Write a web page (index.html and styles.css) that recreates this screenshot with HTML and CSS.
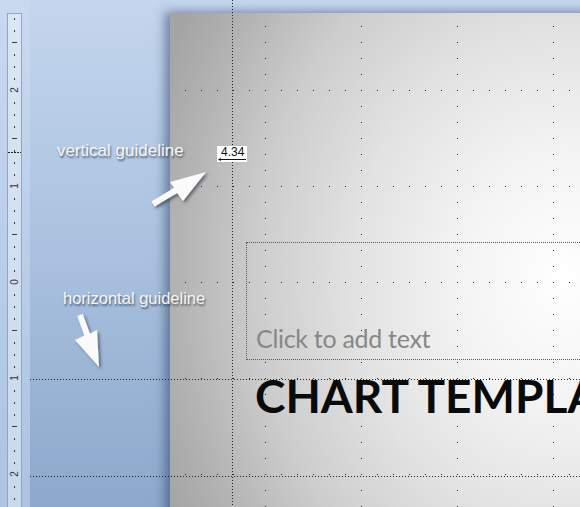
FILE: index.html
```html
<!DOCTYPE html>
<html>
<head>
<meta charset="utf-8">
<link rel="stylesheet" href="styles.css">
</head>
<body>
<div class="screen">
  <div class="ruler-panel">
    <div class="ruler">
      <svg class="ruler-marks" width="13" height="493" viewBox="0 0 13 493">
        <g fill="#3a3a3a">
          <rect x="6" y="4" width="1" height="2"/><rect x="6" y="16" width="1" height="2"/>
          <rect x="6" y="40" width="1" height="2"/><rect x="6" y="52" width="1" height="2"/><rect x="6" y="64" width="1" height="2"/>
          <rect x="6" y="88" width="1" height="2"/><rect x="6" y="100" width="1" height="2"/><rect x="6" y="112" width="1" height="2"/>
          <rect x="6" y="136" width="1" height="2"/><rect x="6" y="148" width="1" height="2"/><rect x="6" y="160" width="1" height="2"/>
          <rect x="6" y="184" width="1" height="2"/><rect x="6" y="196" width="1" height="2"/><rect x="6" y="208" width="1" height="2"/>
          <rect x="6" y="232" width="1" height="2"/><rect x="6" y="244" width="1" height="2"/><rect x="6" y="256" width="1" height="2"/>
          <rect x="6" y="280" width="1" height="2"/><rect x="6" y="292" width="1" height="2"/><rect x="6" y="304" width="1" height="2"/>
          <rect x="6" y="328" width="1" height="2"/><rect x="6" y="340" width="1" height="2"/><rect x="6" y="352" width="1" height="2"/>
          <rect x="6" y="376" width="1" height="2"/><rect x="6" y="388" width="1" height="2"/><rect x="6" y="400" width="1" height="2"/>
          <rect x="6" y="424" width="1" height="2"/><rect x="6" y="436" width="1" height="2"/><rect x="6" y="448" width="1" height="2"/>
          <rect x="6" y="472" width="1" height="2"/><rect x="6" y="484" width="1" height="2"/>
          <rect x="4" y="28" width="5" height="1"/><rect x="4" y="124" width="5" height="1"/>
          <rect x="4" y="220" width="5" height="1"/><rect x="4" y="316" width="5" height="1"/>
          <rect x="4" y="412" width="5" height="1"/>
        </g>
        <line x1="0" y1="138.5" x2="13" y2="138.5" stroke="#222" stroke-width="1" stroke-dasharray="2 1"/>
        <g class="ruler-num">
          <text transform="translate(6.5 76) rotate(-90)">2</text>
          <text transform="translate(6.5 172) rotate(-90)">1</text>
          <text transform="translate(6.5 268) rotate(-90)">0</text>
          <text transform="translate(6.5 364) rotate(-90)">1</text>
          <text transform="translate(6.5 460) rotate(-90)">2</text>
        </g>
      </svg>
    </div>
  </div>
  <div class="workspace">
    <div class="slide">
      <svg class="grid" width="700" height="600">
        <defs>
          <pattern id="dots" x="15" y="13" width="96" height="96" patternUnits="userSpaceOnUse">
            <g fill="#2a2a2a">
              <rect x="80" y="0" width="1" height="1"/><rect x="80" y="16" width="1" height="1"/>
              <rect x="80" y="32" width="1" height="1"/><rect x="80" y="48" width="1" height="1"/>
              <rect x="80" y="64" width="1" height="1"/><rect x="80" y="80" width="1" height="1"/>
              <rect x="0" y="64" width="1" height="1"/><rect x="16" y="64" width="1" height="1"/>
              <rect x="32" y="64" width="1" height="1"/><rect x="48" y="64" width="1" height="1"/>
              <rect x="64" y="64" width="1" height="1"/>
            </g>
          </pattern>
        </defs>
        <rect width="700" height="600" fill="url(#dots)"/>
      </svg>
      <div class="slide-body">
        <div class="placeholder"><span class="placeholder-text">Click to add text</span></div>
        <div class="title">CHART TEMPLATE</div>
      </div>
    </div>
  </div>

  <div class="vguide"></div>
  <div class="hguide hguide-1"></div>
  <div class="hguide hguide-2"></div>

  <div class="label label-v">vertical guideline</div>
  <div class="label label-h">horizontal guideline</div>

  <svg class="arrows" width="580" height="507" viewBox="0 0 580 507">
    <defs>
      <filter id="shadow" x="-30%" y="-30%" width="160%" height="160%">
        <feDropShadow dx="2" dy="2" stdDeviation="1.5" flood-color="#1e2a3a" flood-opacity="0.55"/>
      </filter>
    </defs>
    <polygon filter="url(#shadow)" fill="#fbfbfb" points="151.5,201.4 174.1,187.7 170,182 206,172 183,201 177.2,192.9 154.6,206.6"/>
    <polygon filter="url(#shadow)" fill="#fbfbfb" points="77.2,316 84.3,335.5 75,340 99,367 97,330 89.9,333.5 82.8,314"/>
  </svg>

  <div class="tag">
    <span class="tag-text">4.34</span>
    <svg class="tag-arrow" width="30" height="4" viewBox="0 0 30 4">
      <line x1="3" y1="1.5" x2="29" y2="1.5" stroke="#111" stroke-width="1"/>
      <polygon points="1,1.5 4,0 4,3" fill="#111"/>
    </svg>
  </div>
</div>
</body>
</html>
```

FILE: styles.css
```css
html, body {
  margin: 0;
  padding: 0;
}
body {
  width: 580px;
  height: 507px;
  overflow: hidden;
  font-family: "Liberation Sans", Arial, sans-serif;
}
.screen {
  position: relative;
  width: 580px;
  height: 507px;
  overflow: hidden;
  display: flex;
  background: linear-gradient(to bottom, #c4d6ed 0%, #aac1df 50%, #8ca8cb 100%);
}
.ruler-panel {
  flex: none;
  width: 30px;
  box-sizing: border-box;
  padding: 13px 8px 0 7px;
  display: flex;
  flex-direction: column;
  background: linear-gradient(to bottom, #c9d9ef 0%, #bacee8 50%, #adc3df 100%);
}
.ruler {
  flex: 1;
  border: 1px solid #8fa5c3;
  border-bottom: none;
  background: linear-gradient(to bottom, #dbe6f4 0%, #d2dff0 50%, #c9d8ec 100%);
}
.ruler-marks {
  display: block;
}
.ruler-num text {
  font-family: "Liberation Sans", Arial, sans-serif;
  font-size: 10px;
  fill: #333;
  text-anchor: middle;
  dominant-baseline: central;
}
.workspace {
  flex: 1;
  padding: 13px 0 0 140px;
}
.slide {
  position: relative;
  width: 700px;
  height: 600px;
  background: radial-gradient(ellipse 440px 520px at 395px 265px,
    #ffffff 0%, #f3f3f3 25%, #e2e2e2 48%, #cdcdcd 70%, #b3b3b3 88%, #a4a4a4 100%);
  box-shadow: -5px -1px 10px rgba(40, 62, 100, 0.55);
}
.grid {
  position: absolute;
  left: 0;
  top: 0;
}
.slide-body {
  position: relative;
  padding: 229px 0 0 76px;
}
.placeholder {
  border: 1px dotted #5a5a5a;
  border-right: none;
  display: flex;
  align-items: flex-end;
  padding: 0 0 8px 9px;
  height: 108px;
}
.placeholder-text {
  font-family: Lato, "Open Sans", sans-serif;
  font-size: 25px;
  line-height: 25px;
  letter-spacing: -0.3px;
  color: #878787;
}
.title {
  margin-top: 13px;
  padding-left: 9px;
  font-family: Lato, "Open Sans", sans-serif;
  font-weight: 700;
  font-size: 46px;
  line-height: 46px;
  color: #0a0a0a;
  white-space: nowrap;
}
.vguide {
  position: absolute;
  left: 232px;
  top: 0;
  width: 1px;
  height: 507px;
  background: repeating-linear-gradient(to bottom, #222 0 1px, transparent 1px 3px);
}
.hguide {
  position: absolute;
  left: 30px;
  width: 550px;
  height: 1px;
  background: repeating-linear-gradient(to right, #222 0 1px, transparent 1px 3px);
}
.hguide-1 { top: 379px; }
.hguide-2 { top: 476px; }
.label {
  position: absolute;
  color: #f6f6f6;
  line-height: 1;
  white-space: nowrap;
  text-shadow: 1px 2px 2px rgba(20, 30, 45, 0.6);
}
.label-v {
  left: 57px;
  top: 142px;
  font-size: 17px;
}
.label-h {
  left: 63px;
  top: 290px;
  font-size: 16.5px;
}
.arrows {
  position: absolute;
  left: 0;
  top: 0;
}
.tag {
  position: absolute;
  left: 217px;
  top: 146px;
  width: 30px;
  height: 16px;
  background: #ffffff;
}
.tag-text {
  display: block;
  padding-left: 4px;
  font-size: 12px;
  line-height: 12px;
  color: #111;
}
.tag-arrow {
  display: block;
}
```
